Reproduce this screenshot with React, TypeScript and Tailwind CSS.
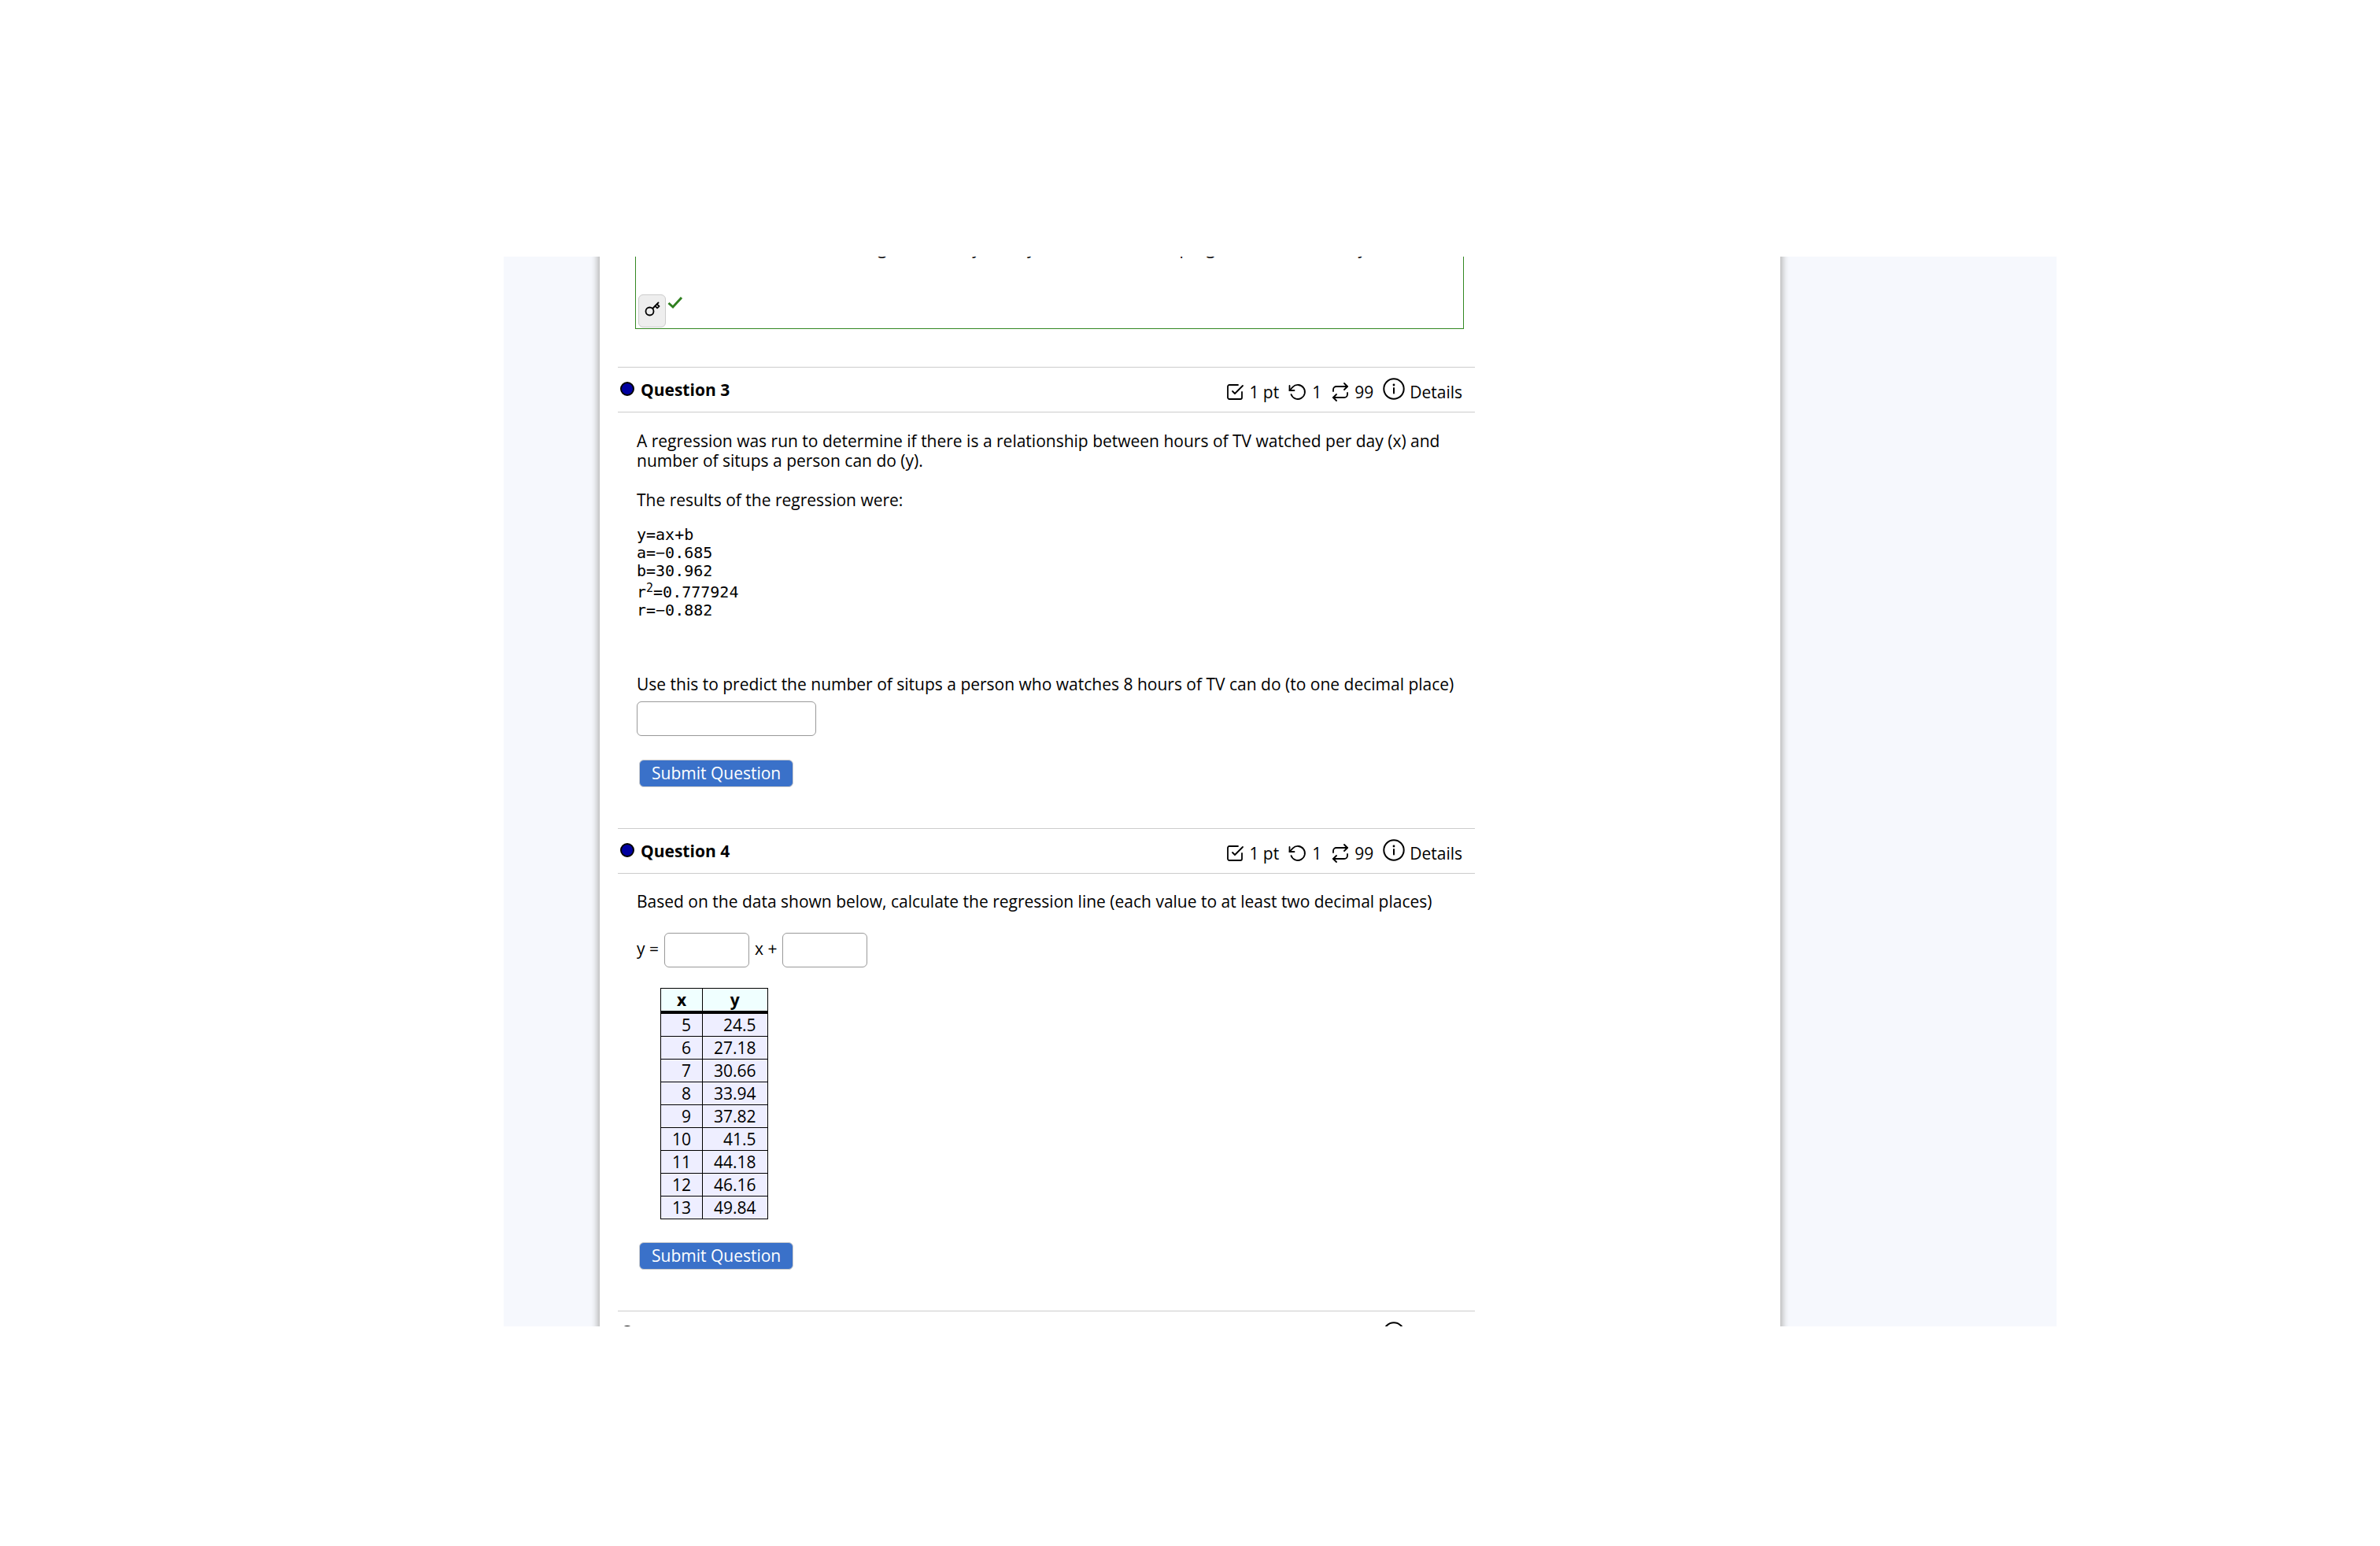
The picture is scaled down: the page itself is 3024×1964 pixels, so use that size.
import React from 'react';

interface IconProps {
    className?: string;
}

const CheckSquareIcon: React.FC<IconProps> = ({ className = 'size-6' }) => (
    <svg className={className} viewBox="0 0 24 24" fill="none" stroke="currentColor" strokeWidth="1.8" strokeLinecap="round" strokeLinejoin="round" aria-hidden="true">
        <path d="M9 11l3 3L22 4" />
        <path d="M21 12v7a2 2 0 0 1-2 2H5a2 2 0 0 1-2-2V5a2 2 0 0 1 2-2h11" />
    </svg>
);

const UndoIcon: React.FC<IconProps> = ({ className = 'size-6' }) => (
    <svg className={className} viewBox="0 0 24 24" fill="none" stroke="currentColor" strokeWidth="1.8" strokeLinecap="round" strokeLinejoin="round" aria-hidden="true">
        <path d="M1.5 4v6h6" />
        <path d="M3.5 15a9 9 0 1 0 2.1-9.4L1.5 10" />
    </svg>
);

const RepeatIcon: React.FC<IconProps> = ({ className = 'size-6' }) => (
    <svg className={className} viewBox="0 0 24 24" fill="none" stroke="currentColor" strokeWidth="1.8" strokeLinecap="round" strokeLinejoin="round" aria-hidden="true">
        <path d="M17 1l4 4-4 4" />
        <path d="M3 11V9a4 4 0 0 1 4-4h14" />
        <path d="M7 23l-4-4 4-4" />
        <path d="M21 13v2a4 4 0 0 1-4 4H3" />
    </svg>
);

const InfoIcon: React.FC<IconProps> = ({ className = 'size-7' }) => (
    <svg className={className} viewBox="0 0 28 28" fill="none" stroke="currentColor" strokeWidth="2" strokeLinecap="round" aria-hidden="true">
        <circle cx="14" cy="14" r="12.7" />
        <path d="M14 13v6.5" />
        <circle cx="14" cy="9" r="1.4" fill="currentColor" stroke="none" />
    </svg>
);

const KeyIcon: React.FC<IconProps> = ({ className = 'size-5' }) => (
    <svg className={className} viewBox="0 0 20 20" fill="none" stroke="currentColor" strokeWidth="1.8" strokeLinecap="round" strokeLinejoin="round" aria-hidden="true">
        <circle cx="6.5" cy="12.5" r="5" />
        <path d="M10.2 9L17.5 1.5" />
        <path d="M13.5 5.8l2.6 2.6 2.4-2.4-2.6-2.4" />
    </svg>
);

const CheckIcon: React.FC<IconProps> = ({ className = 'size-5' }) => (
    <svg className={className} viewBox="0 0 20 20" fill="none" stroke="currentColor" strokeWidth="3" aria-hidden="true">
        <path d="M1.5 11l5.5 5L18 4" />
    </svg>
);

const QuestionHeader: React.FC<{ number: number }> = ({ number }) => (
    <header className="flex h-[58px] items-center justify-between border-y border-[#cccccc] pl-[3px] pr-4">
        <div className="flex items-center gap-2">
            <span className="mb-0.5 size-[18px] rounded-full border-2 border-black bg-[#0000a0]" />
            <h2 className="font-bold">Question {number}</h2>
        </div>
        <div className="flex items-center gap-3 pt-1.5">
            <span className="flex items-center gap-1.5"><CheckSquareIcon /> 1 pt</span>
            <span className="flex items-center gap-1.5"><UndoIcon /> 1</span>
            <span className="flex items-center gap-1.5"><RepeatIcon /> 99</span>
            <button type="button" className="flex items-center gap-1.5"><InfoIcon className="mb-2 size-7" /> Details</button>
        </div>
    </header>
);

const AnswerBox: React.FC<{ label: string; className: string }> = ({ label, className }) => (
    <input type="text" aria-label={label} className={'h-11 rounded-md border border-[#999999] bg-white px-2 ' + className} />
);

const SubmitButton = () => (
    <button type="submit" className="ml-[3px] flex h-[35px] items-center rounded-md border border-[#cccccc] bg-[#3a71c9] px-[15px] text-white">
        Submit Question
    </button>
);

const points = [
    { x: 5, y: 24.5 },
    { x: 6, y: 27.18 },
    { x: 7, y: 30.66 },
    { x: 8, y: 33.94 },
    { x: 9, y: 37.82 },
    { x: 10, y: 41.5 },
    { x: 11, y: 44.18 },
    { x: 12, y: 46.16 },
    { x: 13, y: 49.84 },
];

const App: React.FC = () => {
    return (
        <main className='h-screen bg-white pt-[326px] pr-[411px] pb-[279px] pl-[640px] font-["Open_Sans",sans-serif] text-[21px] leading-[25px] text-black'>
            <div className="h-full overflow-hidden bg-[#f6f8fd] pl-[122px]">
                <div className="-mt-6 max-w-[1500px] bg-white pl-[23px] shadow-[0_0_8px_3px_#b4b4b4]">
                    <div className="max-w-[1089px]">
                        {/* Question 2, scrolled almost out of view */}
                        <section className="mr-[14px] ml-[22px] border border-t-0 border-[#338822]">
                            <p className="pt-px whitespace-nowrap">The table shows a fair increasing rate for any survey set, but then on a program that lasts a day</p>
                            <div className="flex h-[89px] items-start pt-[46px] pl-[3px]">
                                <button type="button" aria-label="Show answer" className="flex h-[42px] w-[35px] items-start justify-center rounded-md border border-[#cccccc] bg-[#eeeeee] pt-2">
                                    <KeyIcon />
                                </button>
                                <CheckIcon className="ml-[2px] size-5 text-[#308020]" />
                            </div>
                        </section>

                        <form className="mt-12">
                            <QuestionHeader number={3} />
                            <div className="pt-6 pl-6">
                                <p>
                                    A regression was run to determine if there is a relationship between hours of TV watched per day (x) and<br />
                                    number of situps a person can do (y).
                                </p>
                                <p className="mt-[25px]">The results of the regression were:</p>
                                <div className='mt-5 font-["DejaVu_Sans_Mono",monospace] text-[20px] leading-[23px]'>
                                    <p>y=ax+b</p>
                                    <p>a=−0.685</p>
                                    <p>b=30.962</p>
                                    <p className="mt-1">r<sup>2</sup>=0.777924</p>
                                    <p>r=−0.882</p>
                                </div>
                                <p className="mt-[70px] mb-[9px]">Use this to predict the number of situps a person who watches 8 hours of TV can do (to one decimal place)</p>
                                <AnswerBox label="Predicted situps" className="mb-[30px] block w-[228px]" />
                                <SubmitButton />
                            </div>
                        </form>

                        <form className="mt-[52px]">
                            <QuestionHeader number={4} />
                            <div className="pt-[23px] pl-6">
                                <p>Based on the data shown below, calculate the regression line (each value to at least two decimal places)</p>
                                <div className="mt-[27px] flex items-center gap-[7px]">
                                    <span className="pb-1">y =</span>
                                    <AnswerBox label="Slope" className="w-[108px]" />
                                    <span className="pb-1">x +</span>
                                    <AnswerBox label="Intercept" className="w-[108px]" />
                                </div>
                                <table className="mt-[26px] mb-[29px] ml-[30px] border-collapse text-right leading-6">
                                    <thead>
                                        <tr className="border-b-4 border-black bg-[#f0ffff] text-center">
                                            <th className="border border-b-4 border-black px-3.5 py-0.5">x</th>
                                            <th className="border border-b-4 border-black px-3.5 py-0.5">y</th>
                                        </tr>
                                    </thead>
                                    <tbody className="bg-[#eeeeff]">
                                        {points.map((point) => (
                                            <tr key={point.x}>
                                                <td className="border border-black px-3.5 py-0.5">{point.x}</td>
                                                <td className="border border-black px-3.5 py-0.5">{point.y}</td>
                                            </tr>
                                        ))}
                                    </tbody>
                                </table>
                                <SubmitButton />
                            </div>
                        </form>

                        <div className="mt-[52px]">
                            <QuestionHeader number={5} />
                        </div>
                    </div>
                </div>
            </div>
        </main>
    );
};

export default App;
